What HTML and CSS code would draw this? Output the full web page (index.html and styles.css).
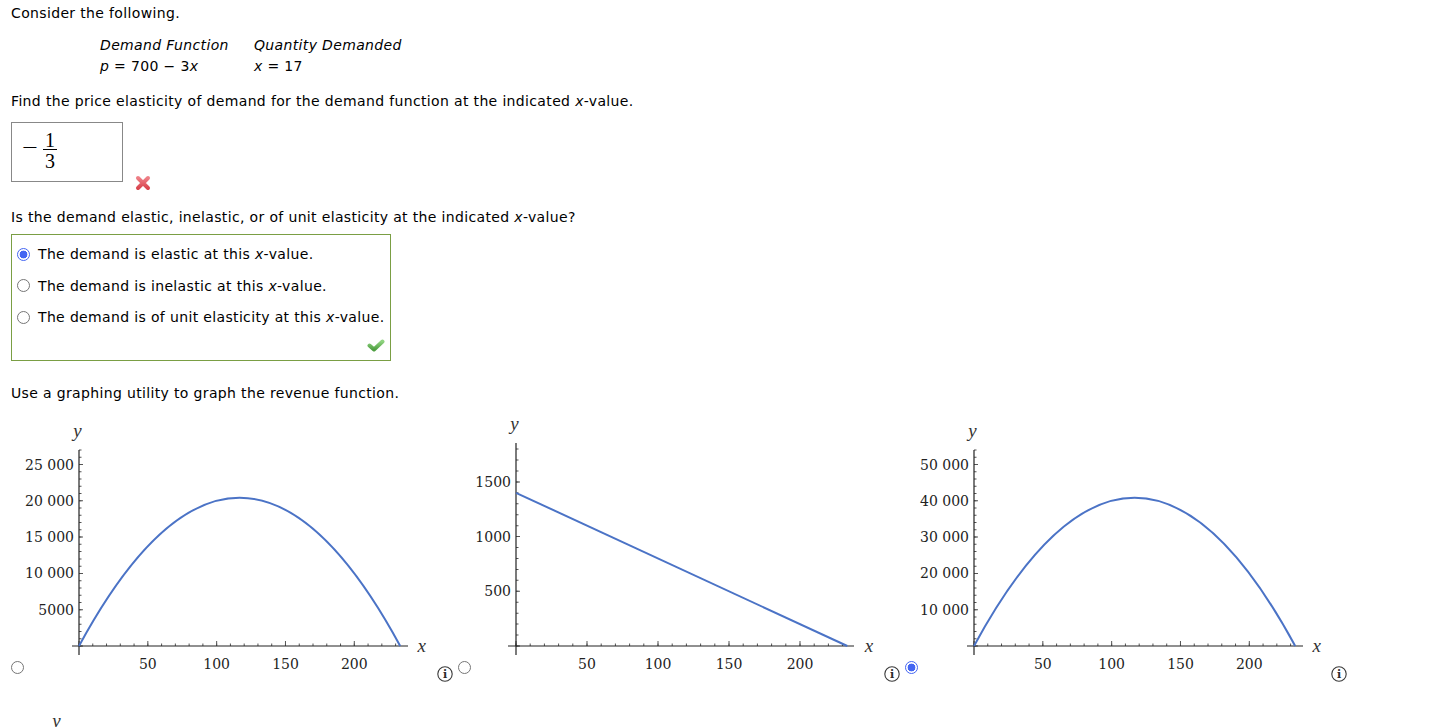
FILE: index.html
```html
<!DOCTYPE html>
<html>
<head>
<meta charset="utf-8">
<title>Price elasticity</title>
<link rel="stylesheet" href="styles.css">
</head>
<body>
<div class="page">
  <p class="line">Consider the following.</p>
  <div class="given">
    <span class="head">Demand Function</span><span class="head">Quantity Demanded</span>
    <span><i>p</i> = 700 &minus; 3<i>x</i></span><span><i>x</i> = 17</span>
  </div>
  <p class="line q1">Find the price elasticity of demand for the demand function at the indicated <i>x</i>-value.</p>
  <div class="answer-row">
    <div class="answer-box">
      <span class="minus">&minus;</span>
      <span class="frac"><span class="num">1</span><span class="den">3</span></span>
    </div>
    <svg class="wrong" width="16" height="16" viewBox="0 0 16 16">
      <defs>
        <linearGradient id="xg" x1="0" y1="0" x2="0" y2="1">
          <stop offset="0" stop-color="#ee7f86"/>
          <stop offset="1" stop-color="#d9464f"/>
        </linearGradient>
      </defs>
      <path d="M3 3 L13 13 M13 3 L3 13" stroke="url(#xg)" stroke-width="4" stroke-linecap="round" fill="none"/>
    </svg>
  </div>
  <p class="line q2">Is the demand elastic, inelastic, or of unit elasticity at the indicated <i>x</i>-value?</p>
  <div class="choices">
    <div class="choice"><span class="radio checked"></span><span>The demand is elastic at this <i>x</i>-value.</span></div>
    <div class="choice"><span class="radio"></span><span>The demand is inelastic at this <i>x</i>-value.</span></div>
    <div class="choice"><span class="radio"></span><span>The demand is of unit elasticity at this <i>x</i>-value.</span></div>
    <div class="mark-row">
      <svg class="right" width="18" height="13" viewBox="0 0 18 13">
        <defs>
          <linearGradient id="cg" x1="0" y1="0" x2="0" y2="1">
            <stop offset="0" stop-color="#8fd37f"/>
            <stop offset="1" stop-color="#4f9f42"/>
          </linearGradient>
        </defs>
        <path d="M2.5 6.5 L7 10.5 L15.5 2.5" stroke="url(#cg)" stroke-width="4" stroke-linecap="round" stroke-linejoin="round" fill="none"/>
      </svg>
    </div>
  </div>
  <p class="line q3">Use a graphing utility to graph the revenue function.</p>

  <div class="graphs">
    <div class="option">
      <span class="radio g-radio"></span>
      <svg class="plot" width="411" height="265" viewBox="25 415 411 265">
        <g class="ticks">
          <line x1="80.25" y1="646.5" x2="80.25" y2="449" stroke-width="2.5" stroke-dasharray="1 6.26"/>
          <line x1="81" y1="646.5" x2="81" y2="449" stroke-width="4" stroke-dasharray="1 35.3"/>
          <line x1="78.5" y1="644.75" x2="408" y2="644.75" stroke-width="2.5" stroke-dasharray="1 12.765"/>
          <line x1="78.5" y1="643.5" x2="408" y2="643.5" stroke-width="5" stroke-dasharray="1 67.825"/>
        </g>
        <g class="axes">
          <line x1="79" y1="450" x2="79" y2="655"/>
          <line x1="72" y1="646" x2="408" y2="646"/>
        </g>
        <g class="ylab">
          <text x="74" y="469.5">25 000</text>
          <text x="74" y="505.8">20 000</text>
          <text x="74" y="542.1">15 000</text>
          <text x="74" y="578.4">10 000</text>
          <text x="74" y="614.7">5000</text>
        </g>
        <g class="xlab">
          <text x="147.8" y="668.5">50</text>
          <text x="216.6" y="668.5">100</text>
          <text x="285.5" y="668.5">150</text>
          <text x="354.3" y="668.5">200</text>
        </g>
        <text class="axname" x="421.7" y="652">x</text>
        <text class="axname" x="77.5" y="437">y</text>
        <path class="curve" d="M79 646 Q239.6 349.6 400.2 646"/>
      </svg>
      <svg class="info" width="16" height="16" viewBox="0 0 16 16"><circle cx="8" cy="8" r="7.2"/><text x="8" y="12.3">i</text></svg>
    </div>

    <div class="option">
      <span class="radio g-radio"></span>
      <svg class="plot" width="411" height="265" viewBox="472 415 411 265">
        <g class="ticks">
          <line x1="517.25" y1="646.5" x2="517.25" y2="443" stroke-width="2.5" stroke-dasharray="1 9.94"/>
          <line x1="518" y1="646.5" x2="518" y2="443" stroke-width="4" stroke-dasharray="1 53.7"/>
          <line x1="515.5" y1="644.75" x2="854" y2="644.75" stroke-width="2.5" stroke-dasharray="1 13.2"/>
          <line x1="515.5" y1="643.5" x2="854" y2="643.5" stroke-width="5" stroke-dasharray="1 70"/>
        </g>
        <g class="axes">
          <line x1="516" y1="443" x2="516" y2="655"/>
          <line x1="508" y1="646" x2="854" y2="646"/>
        </g>
        <g class="ylab">
          <text x="511" y="486.9">1500</text>
          <text x="511" y="541.6">1000</text>
          <text x="511" y="596.3">500</text>
        </g>
        <g class="xlab">
          <text x="587" y="668.5">50</text>
          <text x="658" y="668.5">100</text>
          <text x="729" y="668.5">150</text>
          <text x="800" y="668.5">200</text>
        </g>
        <text class="axname" x="869" y="652">x</text>
        <text class="axname" x="514.5" y="430">y</text>
        <path class="curve" d="M516 492.8 L847.3 646"/>
      </svg>
      <svg class="info" width="16" height="16" viewBox="0 0 16 16"><circle cx="8" cy="8" r="7.2"/><text x="8" y="12.3">i</text></svg>
    </div>

    <div class="option">
      <span class="radio checked g-radio"></span>
      <svg class="plot" width="411" height="265" viewBox="919 415 411 265">
        <g class="ticks">
          <line x1="975.25" y1="646.5" x2="975.25" y2="449" stroke-width="2.5" stroke-dasharray="1 6.26"/>
          <line x1="976" y1="646.5" x2="976" y2="449" stroke-width="4" stroke-dasharray="1 35.3"/>
          <line x1="973.5" y1="644.75" x2="1303" y2="644.75" stroke-width="2.5" stroke-dasharray="1 12.765"/>
          <line x1="973.5" y1="643.5" x2="1303" y2="643.5" stroke-width="5" stroke-dasharray="1 67.825"/>
        </g>
        <g class="axes">
          <line x1="974" y1="450" x2="974" y2="655"/>
          <line x1="967" y1="646" x2="1303" y2="646"/>
        </g>
        <g class="ylab">
          <text x="969" y="469.5">50 000</text>
          <text x="969" y="505.8">40 000</text>
          <text x="969" y="542.1">30 000</text>
          <text x="969" y="578.4">20 000</text>
          <text x="969" y="614.7">10 000</text>
        </g>
        <g class="xlab">
          <text x="1042.8" y="668.5">50</text>
          <text x="1111.6" y="668.5">100</text>
          <text x="1180.5" y="668.5">150</text>
          <text x="1249.3" y="668.5">200</text>
        </g>
        <text class="axname" x="1316.7" y="652">x</text>
        <text class="axname" x="972.5" y="437">y</text>
        <path class="curve" d="M974 646 Q1134.6 349.6 1295.2 646"/>
      </svg>
      <svg class="info" width="16" height="16" viewBox="0 0 16 16"><circle cx="8" cy="8" r="7.2"/><text x="8" y="12.3">i</text></svg>
    </div>
  </div>

  <div class="next-row">
    <svg class="plot" width="411" height="47" viewBox="25 680 411 47">
      <text class="axname" x="56.5" y="725">y</text>
    </svg>
  </div>
</div>
</body>
</html>
```

FILE: styles.css
```css
* {
  box-sizing: border-box;
}

html, body {
  margin: 0;
  background: #ffffff;
}

body {
  font-family: "DejaVu Sans", Verdana, sans-serif;
  font-size: 14px;
  letter-spacing: 0.35px;
  color: #000000;
  overflow: hidden;
}

.page {
  padding: 5px 0 0 11px;
}

.line {
  margin: 0;
  line-height: 16px;
  white-space: nowrap;
}

.given {
  display: grid;
  grid-template-columns: 154px auto;
  grid-auto-rows: 21px;
  line-height: 21px;
  margin: 13.5px 0 0 89px;
  white-space: nowrap;
}

.given .head {
  font-style: italic;
}

.q1 {
  margin-top: 16.5px;
}

.answer-row {
  display: flex;
  align-items: flex-start;
  height: 60px;
  margin-top: 13px;
}

.answer-box {
  width: 112px;
  height: 60px;
  border: 1px solid #888888;
  display: flex;
  align-items: flex-start;
  padding-left: 10px;
  font-family: "Liberation Serif", "Times New Roman", serif;
  font-size: 20px;
  letter-spacing: 0;
}

.minus {
  display: inline-block;
  width: 12px;
  line-height: 20px;
  margin-top: 14.25px;
  transform: scaleX(1.4);
  transform-origin: left center;
}

.frac {
  display: flex;
  flex-direction: column;
  align-items: stretch;
  margin: 8px 0 0 9px;
  text-align: center;
}

.num {
  line-height: 18px;
  padding: 0 2px;
}

.den {
  line-height: 18px;
  padding: 2px 2px 0;
  border-top: 1px solid #000000;
}

.wrong {
  margin: 53px 0 0 11.5px;
}

.q2 {
  margin-top: 27px;
}

.choices {
  width: 380px;
  height: 127px;
  margin-top: 9px;
  border: 1px solid #7a9e44;
  padding-top: 3.5px;
}

.choice {
  display: flex;
  align-items: center;
  height: 31.5px;
  padding-left: 5px;
  white-space: nowrap;
}

.radio {
  flex: none;
  display: inline-block;
  width: 13px;
  height: 13px;
  border: 1px solid #767676;
  border-radius: 50%;
  background: #ffffff;
  margin-right: 8px;
}

.radio.checked {
  border: 1.5px solid #4466f2;
  background: radial-gradient(circle, #4466f2 0 3.6px, #ffffff 4.2px);
}

.mark-row {
  display: flex;
  justify-content: flex-end;
  padding: 5.5px 5px 0 0;
}

.q3 {
  margin-top: 24px;
}

.graphs {
  display: flex;
  align-items: flex-start;
  gap: 5px;
  margin-top: 14px;
}

.option {
  display: flex;
  align-items: flex-start;
}

.g-radio {
  margin: 245.5px 0 0 0;
}

.plot {
  display: block;
  flex: none;
  margin-left: 1px;
  overflow: visible;
}

.info {
  display: block;
  flex: none;
  margin: 251px 0 0 1px;
}

.info circle {
  fill: #ffffff;
  stroke: #3a3a3a;
  stroke-width: 1.1;
}

.info text {
  font-family: "DejaVu Serif", serif;
  font-weight: bold;
  font-size: 11px;
  text-anchor: middle;
  fill: #2a2a2a;
  letter-spacing: 0;
}

.ticks line {
  stroke: #555555;
}

.axes line {
  stroke: #222222;
  stroke-width: 1.2;
}

.ylab text,
.xlab text {
  font-family: "DejaVu Serif", serif;
  font-size: 14px;
  letter-spacing: 0;
  fill: #222222;
}

.ylab text {
  text-anchor: end;
}

.xlab text {
  text-anchor: middle;
}

.axname {
  font-family: "Liberation Serif", "Times New Roman", serif;
  font-style: italic;
  font-size: 19px;
  letter-spacing: 0;
  fill: #333333;
  text-anchor: middle;
}

.curve {
  fill: none;
  stroke: #4b73c6;
  stroke-width: 2;
}

.next-row {
  padding-left: 13px;
}
```
